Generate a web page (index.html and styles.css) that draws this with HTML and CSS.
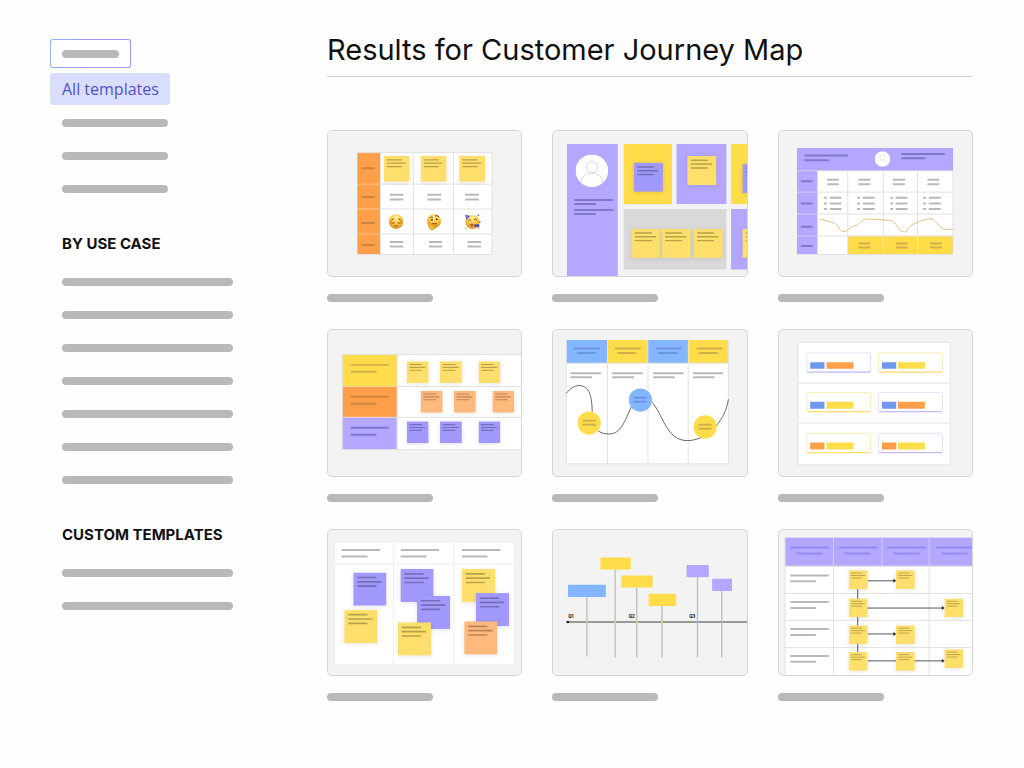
FILE: index.html
```html
<!DOCTYPE html>
<html lang="en">
<head>
    <meta charset="UTF-8">
    <meta name="viewport" content="width=device-width, initial-scale=1.0">
    <title>Results for Customer Journey Map</title>
    <link rel="stylesheet" href="styles.css">
</head>
<body>

    <!-- Shared shapes -->
    <svg class="sprite" aria-hidden="true">
        <symbol id="note" viewBox="0 0 100 100">
            <rect width="100" height="100" fill="currentColor"/>
            <path class="note-lines" d="M12 15H70M12 28H85M12 41H70"/>
        </symbol>
        <symbol id="avatar" viewBox="0 0 98 98">
            <circle cx="49" cy="49" r="49" fill="#fff"/>
            <circle class="avatar-line" cx="49" cy="38" r="17"/>
            <path class="avatar-line" d="M16 84C18 66 31 56 49 56S80 66 82 84"/>
        </symbol>
        <radialGradient id="face" cx="50%" cy="25%" r="75%">
            <stop offset="0" stop-color="#fff3a0"/>
            <stop offset="0.5" stop-color="#fbc740"/>
            <stop offset="1" stop-color="#e58a26"/>
        </radialGradient>
    </svg>

    <div class="page">
        <!-- Sidebar -->
        <nav class="sidebar">
            <button type="button" class="search" aria-label="Search"><span class="bar bar-small"></span></button>
            <a href="#" class="active">All templates</a>
            <ul class="nav-list">
                <li><a href="#" class="bar" aria-label="Category"></a></li>
                <li><a href="#" class="bar" aria-label="Category"></a></li>
                <li><a href="#" class="bar" aria-label="Category"></a></li>
            </ul>

            <h2>BY USE CASE</h2>
            <ul class="nav-list">
                <li><a href="#" class="bar bar-wide" aria-label="Use case"></a></li>
                <li><a href="#" class="bar bar-wide" aria-label="Use case"></a></li>
                <li><a href="#" class="bar bar-wide" aria-label="Use case"></a></li>
                <li><a href="#" class="bar bar-wide" aria-label="Use case"></a></li>
                <li><a href="#" class="bar bar-wide" aria-label="Use case"></a></li>
                <li><a href="#" class="bar bar-wide" aria-label="Use case"></a></li>
                <li><a href="#" class="bar bar-wide" aria-label="Use case"></a></li>
            </ul>

            <h2>CUSTOM TEMPLATES</h2>
            <ul class="nav-list">
                <li><a href="#" class="bar bar-wide" aria-label="Custom template"></a></li>
                <li><a href="#" class="bar bar-wide" aria-label="Custom template"></a></li>
            </ul>
        </nav>

        <!-- Results -->
        <main class="results">
            <h1>Results for Customer Journey Map</h1>

            <div class="grid">
                <!-- Table with emotions -->
                <a href="#" class="template" aria-label="Template">
                    <svg class="thumb" viewBox="24 27 582 438">
                        <rect class="white" x="112" y="92" width="406" height="307"/>
                        <rect class="orange" x="112" y="92" width="70" height="307"/>
                        <path class="rule" d="M112 92H518V399H112M182 92V399M281 92V399M402 92V399M182 187H518M182 262H518M182 337H518"/>
                        <path class="rule rule-soft" d="M112 187H182M112 262H182M112 337H182"/>
                        <path class="text on-orange" d="M124 139H165M124 226H165M124 304H165M124 370H165"/>
                        <use class="note yellow-note" href="#note" x="192" y="102" width="78" height="78"/>
                        <use class="note yellow-note" href="#note" x="303" y="102" width="78" height="78"/>
                        <use class="note yellow-note" href="#note" x="419" y="102" width="78" height="78"/>
                        <path class="text" d="M210 219H251M210 233H251M323 219H364M323 233H364M437 219H478M437 233H478M210 361H251M210 375H251M328 361H368M328 375H368M444 361H485M444 375H485"/>
                        <!-- sad -->
                        <circle cx="229" cy="300" r="22" fill="url(#face)"/>
                        <path class="face-line" d="M213 297Q216 292 222 292M236 292Q242 292 245 297M213 302Q218 307 224 303M234 303Q240 307 245 302M224 314Q229 309 234 314"/>
                        <!-- thinking -->
                        <circle cx="343" cy="298" r="21" fill="url(#face)"/>
                        <path class="face-line" d="M331 289Q335 284 340 287M346 283Q352 280 358 285M336 307Q344 303 351 306"/>
                        <circle cx="337" cy="294" r="3" fill="#5d3b12"/>
                        <circle cx="351" cy="293" r="3" fill="#5d3b12"/>
                        <path d="M327 306Q330 301 334 307L337 311L351 307Q355 309 350 312L343 314Q349 324 337 324Q327 323 327 306Z" fill="#f5b92f" stroke="#cd791b" stroke-width="2"/>
                        <!-- party -->
                        <circle cx="459" cy="301" r="21" fill="url(#face)"/>
                        <path d="M436 279L452 282L441 294Z" fill="#5a55cb"/>
                        <path d="M440 281L444 289" stroke="#9bb2ff" stroke-width="2"/>
                        <path class="face-line" d="M446 297Q450 291 455 296M463 295Q468 289 472 295"/>
                        <path d="M451 307Q457 303 462 308L458 316Q452 315 451 307Z" fill="#b96a1f"/>
                        <path d="M461 309L474 307L481 310L478 318L463 314Z" fill="#5c50ae"/>
                        <path d="M438 318l3 4M475 321l3 2" stroke="#e2813f" stroke-width="3"/>
                        <path d="M475 279l3 3M480 299l2 4" stroke="#565bd0" stroke-width="4"/>
                    </svg>
                    <span class="bar"></span>
                </a>

                <!-- Persona board -->
                <a href="#" class="template" aria-label="Template">
                    <svg class="thumb" viewBox="21 27 582 438">
                        <rect class="purple" x="63" y="66" width="153" height="400"/>
                        <use href="#avatar" x="89" y="98" width="98" height="98"/>
                        <path class="text on-purple" d="M85 235H201M85 247H150M85 265H203M85 277H150"/>
                        <rect class="yellow" x="234" y="66" width="145" height="181"/>
                        <rect class="purple" x="393" y="66" width="150" height="181"/>
                        <rect class="yellow" x="557" y="66" width="60" height="181"/>
                        <rect x="234" y="262" width="309" height="182" fill="#d9d9d9"/>
                        <rect class="purple" x="557" y="262" width="60" height="182"/>
                        <use class="note purple-note" href="#note" x="264" y="122" width="88" height="88"/>
                        <use class="note yellow-note" href="#note" x="425" y="102" width="88" height="88"/>
                        <use class="note purple-note" href="#note" x="591" y="126" width="88" height="88"/>
                        <use class="note yellow-note" href="#note" x="257" y="321" width="88" height="88"/>
                        <use class="note yellow-note" href="#note" x="348" y="321" width="88" height="88"/>
                        <use class="note yellow-note" href="#note" x="444" y="321" width="88" height="88"/>
                        <use class="note yellow-note" href="#note" x="591" y="321" width="88" height="88"/>
                    </svg>
                    <span class="bar"></span>
                </a>

                <!-- Experience map -->
                <a href="#" class="template" aria-label="Template">
                    <svg class="thumb" viewBox="26 27 582 438">
                        <rect class="white" x="80" y="78" width="470" height="321"/>
                        <rect class="purple" x="80" y="78" width="470" height="69"/>
                        <rect class="purple" x="80" y="147" width="62" height="252"/>
                        <rect class="yellow" x="233" y="343" width="317" height="56"/>
                        <path class="rule" d="M142 147H550V399H80M142 147V399M233 147V399M340 147V399M443 147V399M142 211H550M142 277H550M142 343H550"/>
                        <path class="rule rule-soft" d="M80 147H142M80 211H142M80 277H142M80 343H142"/>
                        <path class="text on-purple" d="M103 101H233M103 115H176M394 96H525M394 109H467M92 178H127M92 245H127M92 315H127M92 373H127"/>
                        <use href="#avatar" x="314" y="88" width="47" height="47"/>
                        <path class="text" d="M171 174H206M171 187H206M265 174H301M265 187H301M369 174H405M369 187H405M473 174H508M473 187H508"/>
                        <path class="text" d="M161 228H170M179 228H214M161 245H170M179 245H214M161 262H170M179 262H214M261 228H270M278 228H314M261 245H270M278 245H314M261 262H270M278 262H314M361 228H370M377 228H413M361 245H370M377 245H413M361 262H370M377 262H413M460 228H469M477 228H513M460 245H469M477 245H513M460 262H469M477 262H513"/>
                        <path class="mood" d="M149 292L190 303C206 307 206 330 222 330C236 328 240 314 262 310C272 302 276 292 295 292L360 296C385 302 381 330 404 331C415 331 412 316 430 308C450 300 470 289 487 292C500 298 512 322 525 323H550"/>
                        <path class="text on-yellow" d="M265 366H301M265 378H301M378 366H413M378 378H413M481 366H516M481 378H516"/>
                    </svg>
                    <span class="bar"></span>
                </a>

                <!-- Swimlanes -->
                <a href="#" class="template" aria-label="Template">
                    <svg class="thumb" viewBox="24 24 582 438">
                        <rect class="white" x="232" y="98" width="380" height="286"/>
                        <rect class="yellow" x="67" y="98" width="165" height="96"/>
                        <rect class="orange" x="67" y="194" width="165" height="93"/>
                        <rect class="purple" x="67" y="287" width="165" height="97"/>
                        <path class="rule" d="M67 98H612M232 194H612M232 287H612M67 384H612M67 98V384M232 98V384"/>
                        <path class="rule rule-soft" d="M67 194H232M67 287H232"/>
                        <path class="text on-yellow" d="M93 129H207M93 150H170"/>
                        <path class="text on-orange" d="M93 225H207M93 246H170"/>
                        <path class="text on-purple" d="M93 318H207M93 339H170"/>
                        <use class="note yellow-note" href="#note" x="261" y="118" width="66" height="66"/>
                        <use class="note yellow-note" href="#note" x="361" y="118" width="66" height="66"/>
                        <use class="note yellow-note" href="#note" x="477" y="118" width="66" height="66"/>
                        <use class="note orange-note" href="#note" x="303" y="207" width="66" height="66"/>
                        <use class="note orange-note" href="#note" x="403" y="207" width="66" height="66"/>
                        <use class="note orange-note" href="#note" x="519" y="207" width="66" height="66"/>
                        <use class="note purple-note" href="#note" x="261" y="299" width="66" height="66"/>
                        <use class="note purple-note" href="#note" x="361" y="299" width="66" height="66"/>
                        <use class="note purple-note" href="#note" x="477" y="299" width="66" height="66"/>
                    </svg>
                    <span class="bar"></span>
                </a>

                <!-- Journey curve -->
                <a href="#" class="template" aria-label="Template">
                    <svg class="thumb" viewBox="21 24 582 438">
                        <rect class="white" x="61" y="54" width="488" height="373"/>
                        <rect class="blue" x="61" y="54" width="124" height="70"/>
                        <rect class="yellow" x="185" y="54" width="122" height="70"/>
                        <rect class="blue" x="307" y="54" width="121" height="70"/>
                        <rect class="yellow" x="428" y="54" width="121" height="70"/>
                        <path class="rule" d="M61 54V427H549V54M185 124V427M307 124V427M428 124V427M61 124H549"/>
                        <path class="rule rule-soft" d="M185 54V124M307 54V124M428 54V124"/>
                        <path class="text on-blue" d="M84 80H162M93 93H150M330 80H408M337 93H396"/>
                        <path class="text on-yellow" d="M207 80H285M215 93H272M453 80H531M461 93H518"/>
                        <path class="text" d="M73 154H165M73 166H138M199 154H291M199 166H265M322 154H414M322 166H388M442 154H533M442 166H507"/>
                        <path class="curve" d="M61 215C75 197 88 191 100 191C131 193 138 222 139 270M157 328C168 335 177 337 190 337C226 337 237 297 257 255M317 240C352 273 360 357 425 357C443 357 455 353 468 347M513 312C533 287 543 267 549 233"/>
                        <circle class="yellow" cx="130" cy="304" r="35"/>
                        <circle class="blue" cx="284" cy="235" r="35"/>
                        <circle class="yellow" cx="479" cy="316" r="35"/>
                        <path class="text on-yellow" d="M110 297H150M110 309H150M459 309H498M459 321H498"/>
                        <path class="text on-blue" d="M264 228H303M264 240H303"/>
                    </svg>
                    <span class="bar"></span>
                </a>

                <!-- Story cards -->
                <a href="#" class="template" aria-label="Template">
                    <svg class="thumb" viewBox="26 24 582 438">
                        <rect class="white" x="83" y="61" width="458" height="369"/>
                        <path class="rule" d="M83 61H541V430H83ZM83 184H541M83 304H541"/>
                        <g class="story-purple">
                            <rect x="110" y="93" width="192" height="58" rx="4"/>
                            <rect x="326" y="212" width="192" height="58" rx="4"/>
                            <rect x="326" y="335" width="192" height="58" rx="4"/>
                            <path d="M111 151H301M327 270H517M327 393H517"/>
                        </g>
                        <g class="story-yellow">
                            <rect x="326" y="93" width="192" height="58" rx="4"/>
                            <rect x="110" y="212" width="192" height="58" rx="4"/>
                            <rect x="110" y="335" width="192" height="58" rx="4"/>
                            <path d="M327 151H517M111 270H301M111 393H301"/>
                        </g>
                        <path fill="#6f99ea" d="M120 121h43v20h-43zM336 121h43v20h-43zM120 240h43v21h-43zM336 240h43v21h-43z"/>
                        <path class="orange" d="M169 121h81v20h-81zM384 240h81v21h-81zM120 363h43v21h-43zM336 363h43v21h-43z"/>
                        <path class="yellow" d="M384 121h81v20h-81zM169 240h81v21h-81zM169 363h81v21h-81zM384 363h81v21h-81z"/>
                    </svg>
                    <span class="bar"></span>
                </a>

                <!-- Three columns of notes -->
                <a href="#" class="template" aria-label="Template">
                    <svg class="thumb" viewBox="24 22 582 438">
                        <rect class="white" x="44" y="58" width="541" height="369"/>
                        <path class="rule rule-light" d="M44 58H585V427H44ZM221 58V427M403 58V427M44 124H585"/>
                        <path class="text" d="M65 82H181M65 102H143M243 82H358M243 102H320M427 82H543M427 102H504"/>
                        <use class="note purple-note" href="#note" x="100" y="150" width="100" height="100"/>
                        <use class="note yellow-note" href="#note" x="73" y="262" width="100" height="100"/>
                        <use class="note purple-note" href="#note" x="242" y="139" width="100" height="100"/>
                        <use class="note purple-note" href="#note" x="292" y="220" width="100" height="100"/>
                        <use class="note yellow-note" href="#note" x="234" y="300" width="100" height="100"/>
                        <use class="note yellow-note" href="#note" x="427" y="139" width="100" height="100"/>
                        <use class="note purple-note" href="#note" x="469" y="212" width="100" height="100"/>
                        <use class="note orange-note" href="#note" x="434" y="297" width="100" height="100"/>
                    </svg>
                    <span class="bar"></span>
                </a>

                <!-- Timeline -->
                <a href="#" class="template" aria-label="Template">
                    <svg class="thumb" viewBox="21 22 582 438">
                        <path class="axis" d="M61 299H606"/>
                        <circle cx="66" cy="299" r="4" fill="#222"/>
                        <path class="stem" d="M123 224V403M208 141V406M273 195V406M349 250V406M456 164V406M529 206V406"/>
                        <circle cx="123" cy="300" r="3" fill="#ffc06e"/>
                        <circle class="yellow" cx="208" cy="300" r="3"/>
                        <circle class="yellow" cx="273" cy="300" r="3"/>
                        <circle class="yellow" cx="349" cy="300" r="3"/>
                        <circle class="purple" cx="456" cy="300" r="3"/>
                        <circle class="purple" cx="529" cy="300" r="3"/>
                        <rect class="blue" x="66" y="187" width="114" height="37" rx="3"/>
                        <rect class="yellow" x="164" y="105" width="91" height="36" rx="3"/>
                        <rect class="yellow" x="227" y="159" width="94" height="36" rx="3"/>
                        <rect class="yellow" x="309" y="214" width="83" height="37" rx="3"/>
                        <rect class="purple" x="423" y="127" width="67" height="37" rx="3"/>
                        <rect class="purple" x="500" y="169" width="60" height="37" rx="3"/>
                        <text class="quarter" x="67" y="287">Q1</text>
                        <text class="quarter" x="249" y="287">Q2</text>
                        <text class="quarter" x="431" y="287">Q3</text>
                    </svg>
                    <span class="bar"></span>
                </a>

                <!-- Flow table -->
                <a href="#" class="template" aria-label="Template">
                    <svg class="thumb" viewBox="26 22 582 438">
                        <rect class="white" x="44" y="45" width="570" height="420"/>
                        <rect class="purple" x="44" y="45" width="570" height="86"/>
                        <path class="rule" d="M44 45V460M190 131V460M478 131V460M44 131H610M44 213H610M44 294H610M44 376H610"/>
                        <path class="rule rule-soft" d="M190 45V131M336 45V131M478 45V131"/>
                        <path class="text on-header" d="M60 75H176M78 93H155M206 75H322M222 93H300M351 75H468M371 93H449M498 75H612M516 93H594"/>
                        <path class="text" d="M60 159H176M60 176H137M60 239H176M60 257H137M60 320H176M60 338H137M60 401H176M60 419H137"/>
                        <path class="link" d="M263 200V389M293 175H376M290 257H523M293 335H376M293 416H523"/>
                        <path class="link-head" d="M370 169L379 175L370 181ZM516 251L525 257L516 263ZM370 329L379 335L370 341ZM516 410L525 416L516 422Z"/>
                        <use class="note yellow-note" href="#note" x="236" y="143" width="57" height="57"/>
                        <use class="note yellow-note" href="#note" x="378" y="143" width="57" height="57"/>
                        <use class="note yellow-note" href="#note" x="236" y="228" width="57" height="57"/>
                        <use class="note yellow-note" href="#note" x="524" y="228" width="57" height="57"/>
                        <use class="note yellow-note" href="#note" x="236" y="309" width="57" height="57"/>
                        <use class="note yellow-note" href="#note" x="378" y="309" width="57" height="57"/>
                        <use class="note yellow-note" href="#note" x="236" y="389" width="57" height="57"/>
                        <use class="note yellow-note" href="#note" x="378" y="389" width="57" height="57"/>
                        <use class="note yellow-note" href="#note" x="524" y="381" width="57" height="57"/>
                    </svg>
                    <span class="bar"></span>
                </a>
            </div>
        </main>
    </div>

</body>
</html>
```

FILE: styles.css
```css
* {
    box-sizing: border-box;
}

body {
    margin: 0;
    background: #fefefe;
    color: #111;
    font-family: Inter, Arial, sans-serif;
}

.sprite {
    position: absolute;
    width: 0;
    height: 0;
}

.page {
    display: flex;
}

/* Sidebar */
.sidebar {
    flex: 0 0 277px;
    display: flex;
    flex-direction: column;
    align-items: flex-start;
    margin-left: 50px;
    padding-top: 39px;
}

.search {
    display: flex;
    align-items: center;
    height: 29px;
    padding: 0 11px;
    border: 1px solid transparent;
    border-radius: 3px;
    background: linear-gradient(#fff, #fff) padding-box,
                linear-gradient(100deg, #8ab8ff, #a294ff 50%) border-box;
    cursor: pointer;
}

.active {
    height: 32px;
    margin-top: 5px;
    padding: 0 11px 0 12px;
    border-radius: 3px;
    background: #dadefd;
    color: #5250c6;
    font-family: "Open Sans", sans-serif;
    font-size: 16px;
    line-height: 32px;
    text-decoration: none;
}

.nav-list {
    display: flex;
    flex-direction: column;
    gap: 25px;
    margin: 14px 0 0 12px;
    padding: 0;
    list-style: none;
}

.bar {
    display: block;
    width: 106px;
    height: 8px;
    border-radius: 4px;
    background: #b9b9b9;
}

.bar-wide {
    width: 171px;
}

.bar-small {
    width: 57px;
}

h2 {
    margin: 41px 0 10px 12px;
    font-size: 15px;
    font-weight: 700;
    line-height: 20px;
}

/* Results */
.results {
    flex: 1;
    min-width: 0;
    margin-right: 51px;
    padding-top: 32px;
}

h1 {
    margin: 0 0 53px;
    padding-bottom: 8px;
    border-bottom: 1px solid #d2d2d2;
    font-size: 29px;
    font-weight: 400;
    line-height: 36px;
}

.grid {
    display: grid;
    grid-template-columns: repeat(3, 1fr);
    gap: 27px 30px;
}

.template {
    display: flex;
    flex-direction: column;
    gap: 17px;
}

.thumb {
    display: block;
    width: 100%;
    border: 1px solid #d6d6d6;
    border-radius: 5px;
    background: #f3f3f3;
    overflow: hidden;
}

/* Fills */
.white { fill: #fff; }
.yellow { fill: #ffdc49; }
.orange { fill: #ff9f4a; }
.purple { fill: #b3a7ff; }
.blue { fill: #84b5ff; }

/* Table lines */
.rule {
    fill: none;
    stroke: #e2e2e2;
    stroke-width: 3;
}

.rule-light {
    stroke: #efefef;
}

.rule-soft {
    stroke: rgba(255, 255, 255, 0.4);
}

/* Placeholder text */
.text {
    fill: none;
    stroke: #b9b9b9;
    stroke-width: 6;
}

.on-yellow { stroke: #cfb04d; }
.on-orange { stroke: #cc8542; }
.on-purple { stroke: #8079cb; }
.on-blue { stroke: #6c95dc; }
.on-header { stroke: #9389f7; }

/* Sticky notes */
.note {
    filter: drop-shadow(0 3px 8px rgba(0, 0, 0, 0.1));
}

.note-lines {
    fill: none;
    stroke: rgba(0, 0, 0, 0.28);
    stroke-width: 5;
}

.yellow-note { color: #ffdf6b; }
.orange-note { color: #ffb97c; }
.purple-note { color: #a299fd; }

.avatar-line {
    fill: none;
    stroke: #d9d9d9;
    stroke-width: 3;
}

.face-line {
    fill: none;
    stroke: #80501a;
    stroke-width: 3;
}

/* Charts */
.mood {
    fill: none;
    stroke: #e6bd84;
    stroke-width: 3;
}

.curve {
    fill: none;
    stroke: #666;
    stroke-width: 3;
}

.axis {
    stroke: #777b77;
    stroke-width: 4;
}

.stem {
    fill: none;
    stroke: #bdbdbd;
    stroke-width: 4;
}

.quarter {
    font-size: 13px;
    font-weight: 700;
}

/* Story cards */
.story-purple,
.story-yellow {
    fill: #fff;
    stroke: #e2e2fb;
    stroke-width: 3;
}

.story-yellow {
    stroke: #fdebb4;
}

.story-purple path {
    stroke: #c4bdf7;
    stroke-width: 4;
}

.story-yellow path {
    stroke: #fbdd74;
    stroke-width: 4;
}

/* Flow arrows */
.link {
    fill: none;
    stroke: #555;
    stroke-width: 3;
}

.link-head {
    fill: #333;
}
```
